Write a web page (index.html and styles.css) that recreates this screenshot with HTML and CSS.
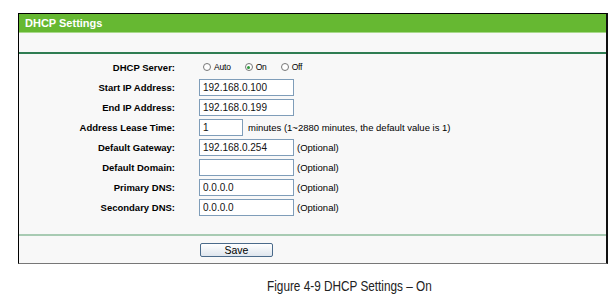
FILE: index.html
```html
<!DOCTYPE html>
<html lang="en">
<head>
    <meta charset="UTF-8">
    <title>DHCP Settings</title>
    <link rel="stylesheet" href="styles.css">
</head>
<body>

<div class="panel">
    <div class="panel-title">DHCP Settings</div>
    <div class="panel-gap"></div>

    <div class="panel-body">
        <div class="row">
            <span class="label">DHCP Server:</span>
            <span class="field">
                <span class="radio"></span><span class="radio-text">Auto</span>
                <span class="radio checked"></span><span class="radio-text">On</span>
                <span class="radio"></span><span class="radio-text">Off</span>
            </span>
        </div>
        <div class="row">
            <span class="label">Start IP Address:</span>
            <span class="field"><input type="text" value="192.168.0.100"></span>
        </div>
        <div class="row">
            <span class="label">End IP Address:</span>
            <span class="field"><input type="text" value="192.168.0.199"></span>
        </div>
        <div class="row">
            <span class="label">Address Lease Time:</span>
            <span class="field"><input type="text" class="short" value="1"><span class="note">minutes (1~2880 minutes, the default value is 1)</span></span>
        </div>
        <div class="row">
            <span class="label">Default Gateway:</span>
            <span class="field"><input type="text" value="192.168.0.254"><span class="hint">(Optional)</span></span>
        </div>
        <div class="row">
            <span class="label">Default Domain:</span>
            <span class="field"><input type="text" value=""><span class="hint">(Optional)</span></span>
        </div>
        <div class="row">
            <span class="label">Primary DNS:</span>
            <span class="field"><input type="text" value="0.0.0.0"><span class="hint">(Optional)</span></span>
        </div>
        <div class="row">
            <span class="label">Secondary DNS:</span>
            <span class="field"><input type="text" value="0.0.0.0"><span class="hint">(Optional)</span></span>
        </div>
    </div>

    <div class="panel-foot">
        <button type="button">Save</button>
    </div>
</div>

<p class="caption"><span class="caption-text">Figure 4-9 DHCP Settings &ndash; On</span></p>

</body>
</html>
```

FILE: styles.css
```css
body {
    margin: 0;
    padding-top: 13px;
    font-family: "Liberation Sans", Arial, sans-serif;
    color: #000;
    background-color: #fff;
}
.panel {
    margin-left: 18px;
    width: 587px;
    background-color: #f8f8f8;
    border-top: 1px solid #000;
    border-left: 1px solid #000;
    border-right: 2px solid #111;
    border-bottom: 1px solid #777;
}
.panel-title {
    height: 18px;
    line-height: 18px;
    padding-left: 6px;
    background-color: #66b832;
    border-bottom: 1px solid #a8d98a;
    color: #fff;
    font-size: 11px;
    font-weight: bold;
}
.panel-gap {
    height: 19px;
    border-bottom: 2px solid #2f7d52;
}
.panel-body {
    padding: 3px 0 17px;
}
.row {
    display: grid;
    grid-template-columns: 156px 1fr;
    column-gap: 24px;
    align-items: center;
    height: 20px;
    font-size: 9.5px;
}
.label {
    text-align: right;
    font-weight: bold;
}
.field {
    display: flex;
    align-items: center;
}
input {
    box-sizing: border-box;
    width: 95px;
    height: 17px;
    margin: 0;
    padding: 0 3px;
    border: 1px solid #7f9db9;
    background-color: #fff;
    font-family: inherit;
    font-size: 10px;
    color: #111;
}
input.short {
    width: 44px;
}
.note {
    margin-left: 5px;
}
.hint {
    margin-left: 3px;
}
.radio {
    box-sizing: border-box;
    width: 8px;
    height: 8px;
    margin-left: 4px;
    border: 1px solid #777;
    border-radius: 50%;
    background-color: #fff;
    position: relative;
}
.radio.checked::after {
    content: "";
    position: absolute;
    left: 1.5px;
    top: 1.5px;
    width: 3px;
    height: 3px;
    border-radius: 50%;
    background-color: #2a9a3a;
}
.radio-text {
    margin-left: 3px;
    margin-right: 10px;
    font-size: 8.5px;
    letter-spacing: -0.2px;
}
.panel-foot {
    height: 27px;
    border-top: 2px solid #a8cbb3;
    padding-left: 181px;
    display: flex;
    align-items: center;
}
button {
    width: 73px;
    height: 14px;
    padding: 0;
    border: 1px solid #4a6a8a;
    border-radius: 2px;
    background: linear-gradient(#ffffff, #dfe6ee);
    font-family: inherit;
    font-size: 10.5px;
    line-height: 12px;
    color: #000;
    cursor: pointer;
}
.caption {
    margin: 14px 0 0;
    padding-left: 84px;
    text-align: center;
    font-size: 15.5px;
    line-height: 16px;
    color: #222;
}
.caption-text {
    display: inline-block;
    transform: scaleX(0.76);
}
```
